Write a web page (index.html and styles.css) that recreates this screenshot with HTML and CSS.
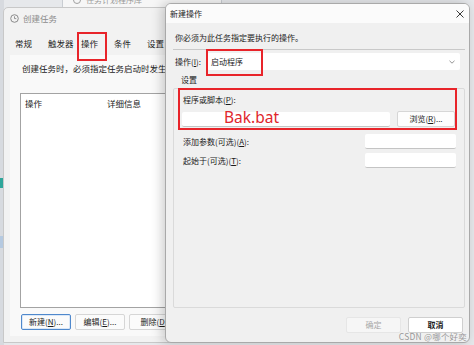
FILE: index.html
```html
<!DOCTYPE html>
<html>
<head>
    <meta charset="UTF-8">
    <title>新建操作</title>
    <link rel="stylesheet" href="styles.css">
</head>
<body>
<div class="desk">
    <!-- window behind everything, only its bottom strip shows -->
    <div class="win-far">
        <span class="far-icon"></span>
        <span class="far-title">任务计划程序库</span>
    </div>

    <!-- 创建任务 -->
    <div class="win-back">
        <div class="back-title">
            <svg class="clock" width="9" height="9" viewBox="0 0 9 9">
                <circle cx="4.5" cy="4.5" r="3.8" fill="none" stroke="#8a8a8a" stroke-width="1"/>
                <path d="M4.5 2.3V4.6H6.3" fill="none" stroke="#8a8a8a" stroke-width="0.9"/>
            </svg>
            <span>创建任务</span>
        </div>
        <div class="tabs">
            <span class="tab">常规</span>
            <span class="tab">触发器</span>
            <span class="tab tab-mark">操作</span>
            <span class="tab">条件</span>
            <span class="tab">设置</span>
        </div>
        <div class="panel">
            <div class="panel-desc">创建任务时，必须指定任务启动时发生的操作。</div>
            <div class="list">
                <div class="list-head">
                    <span class="col-a">操作</span>
                    <span>详细信息</span>
                </div>
            </div>
            <div class="list-btns">
                <span class="btn btn-focus">新建(<u>N</u>)...</span>
                <span class="btn">编辑(<u>E</u>)...</span>
                <span class="btn">删除(<u>D</u>)</span>
            </div>
        </div>
    </div>

    <!-- 新建操作 -->
    <div class="dlg">
        <div class="dlg-title">
            <span>新建操作</span>
            <svg width="8" height="8" viewBox="0 0 8 8">
                <path d="M0.5 0.5L7.5 7.5M7.5 0.5L0.5 7.5" stroke="#222" stroke-width="0.9"/>
            </svg>
        </div>
        <div class="dlg-body">
            <div class="lead">你必须为此任务指定要执行的操作。</div>
            <div class="sep"></div>
            <div class="op-row">
                <div class="op-label">操作(<u>I</u>):</div>
                <div class="combo">
                    <span class="combo-text">启动程序</span>
                    <svg width="6" height="4" viewBox="0 0 6 4">
                        <path d="M0.5 0.8L3 3.2L5.5 0.8" fill="none" stroke="#777" stroke-width="0.8"/>
                    </svg>
                </div>
            </div>
            <div class="grp-label">设置</div>
            <div class="grp">
                <div class="hl">
                    <div class="field-label">程序或脚本(<u>P</u>):</div>
                    <div class="prog-row">
                        <div class="input prog-input"><span class="big">Bak.bat</span></div>
                        <span class="btn browse">浏览(<u>R</u>)...</span>
                    </div>
                </div>
                <div class="opt-row">
                    <span>添加参数(可选)(<u>A</u>):</span>
                    <div class="input opt-input"></div>
                </div>
                <div class="opt-row">
                    <span>起始于(可选)(<u>T</u>):</span>
                    <div class="input opt-input"></div>
                </div>
            </div>
            <div class="actions">
                <span class="btn act disabled">确定</span>
                <span class="btn act cancel">取消</span>
            </div>
        </div>
        <div class="watermark">CSDN @哪个好奕</div>
    </div>
</div>
</body>
</html>
```

FILE: styles.css
```css
* {
    box-sizing: border-box;
}
body {
    margin: 0;
    background-color: #e4e6e9;
    font-family: "Noto Sans CJK SC", "Noto Sans", sans-serif;
    color: #1b1b1b;
}
u {
    text-decoration-thickness: 0.5px;
    text-underline-offset: 1px;
}

.desk {
    position: relative;
    width: 474px;
    height: 345px;
    overflow: hidden;
    background-color: #e6e8eb;
    background-image: linear-gradient(to bottom, #d7dadf 0, #d7dadf 178px, #2fa59a 178px, #2fa59a 188px,
        #d7dadf 188px, #d7dadf 236px, #b5c9e0 236px, #b5c9e0 248px, #d7dadf 248px);
    background-size: 4px 345px;
    background-repeat: no-repeat;
}

/* far window */
.win-far {
    position: absolute;
    left: 62px;
    top: -12px;
    width: 160px;
    height: 20px;
    background-color: #f6f6f6;
    border: 1px solid #c9cdd2;
    display: flex;
    align-items: flex-end;
    padding: 0 0 2px 10px;
    gap: 5px;
    font-size: 8px;
    color: #9a9a9a;
}
.far-icon {
    width: 8px;
    height: 8px;
    border-radius: 50%;
    border: 1px solid #a0a0a0;
    margin-bottom: 1px;
}

/* back window */
.win-back {
    position: absolute;
    left: 3px;
    top: 7px;
    width: 210px;
    height: 336px;
    background-color: #f2f2f2;
    border: 1px solid #c8c8c8;
    border-radius: 5px 5px 0 0;
    font-size: 8.5px;
    line-height: 12px;
}
.back-title {
    height: 20px;
    display: flex;
    align-items: center;
    padding-left: 6px;
    gap: 4px;
    color: #8c8c8c;
}
.tabs {
    display: flex;
    margin-top: 9px;
    padding-left: 11px;
}
.tab {
    width: 33px;
    position: relative;
}
.tab-mark::after {
    content: "";
    position: absolute;
    left: -4px;
    top: -5px;
    width: 26px;
    height: 25px;
    border: 2px solid #e8242a;
}
.panel {
    margin: 6px 0 0 6px;
    padding: 7px 0 0 10px;
    height: 281px;
    background-color: #f9f9f9;
}
.panel-desc {
    margin-left: 2px;
    white-space: nowrap;
}
.list {
    margin-top: 19px;
    height: 215px;
    background-color: #ffffff;
    border: 1px solid #a3a3a3;
    border-right: none;
}
.list-head {
    display: flex;
    padding: 3px 0 0 4px;
}
.col-a {
    width: 82px;
}
.list-btns {
    display: flex;
    gap: 4px;
    margin-top: 6px;
    padding-left: 1px;
}

.btn {
    display: flex;
    align-items: center;
    justify-content: center;
    height: 16px;
    width: 50px;
    font-size: 8px;
    background-color: #fbfbfb;
    border: 1px solid #d6d6d6;
    border-radius: 2px;
    white-space: nowrap;
}
.btn-focus {
    border: 1px solid #4f88cc;
    box-shadow: inset 0 0 0 1px #dbe8f7;
}

/* front dialog */
.dlg {
    position: absolute;
    left: 165px;
    top: 3px;
    width: 305px;
    height: 340px;
    background-color: #f0f0f0;
    border: 1px solid #a9a9a9;
    border-radius: 6px;
    overflow: hidden;
    box-shadow: -3px 0 12px rgba(0, 0, 0, 0.2);
    font-size: 8px;
    line-height: 12px;
}
.dlg-title {
    height: 19px;
    display: flex;
    align-items: center;
    justify-content: space-between;
    padding: 0 5px 0 4px;
    background-color: #fbfbfb;
}
.dlg-body {
    display: flex;
    flex-direction: column;
    padding: 9px 4px 0 7px;
}
.lead {
    margin-left: 2px;
}
.sep {
    margin-top: 5px;
    border-top: 1px solid #c9c9c9;
}
.op-row {
    display: flex;
    align-items: center;
    margin-top: 3px;
    height: 17px;
}
.op-label {
    flex-shrink: 0;
    margin: 0 6px 0 2px;
    white-space: nowrap;
}
.combo {
    flex: 1;
    height: 17px;
    margin-right: 5px;
    background-color: #ffffff;
    border-radius: 2px;
    display: flex;
    align-items: center;
    justify-content: space-between;
    padding: 0 5px 0 4px;
}
.combo-text {
    position: relative;
}
.combo-text::after {
    content: "";
    position: absolute;
    left: -5px;
    top: -7px;
    width: 53px;
    height: 23px;
    border: 2px solid #e8242a;
}
.grp-label {
    margin: 4px 0 0 8px;
}
.grp {
    margin-top: 2px;
    height: 220px;
    border: 1px solid #dadada;
    border-radius: 2px;
}
.hl {
    margin: -1px 7px 0 4px;
    border: 2px solid #e8242a;
    padding: 4px 0 1px 2px;
}
.field-label {
    margin-left: 1px;
}
.prog-row {
    display: flex;
    align-items: center;
    gap: 7px;
    margin-top: 5px;
}
.input {
    height: 15px;
    background-color: #ffffff;
    border-bottom: 1px solid #c4c4c4;
    border-radius: 2px;
}
.prog-input {
    width: 208px;
    display: flex;
    align-items: center;
    padding-left: 42px;
}
.big {
    font-family: "Noto Sans", sans-serif;
    font-size: 15.5px;
    color: #e0262c;
    line-height: 15px;
    margin-top: -3px;
}
.browse {
    width: 58px;
    background-color: #fdfdfd;
}
.opt-row {
    display: flex;
    align-items: center;
    justify-content: space-between;
    height: 15px;
    margin: 4px 8px 0 9px;
}
.opt-input {
    width: 91px;
}
.actions {
    display: flex;
    justify-content: flex-end;
    gap: 7px;
    margin: 9px 2px 0 0;
}
.act {
    width: 55px;
}
.disabled {
    color: #a8a8a8;
    background-color: #f6f6f6;
    border-color: #e6e6e6;
}
.cancel {
    background-color: #ffffff;
    border-color: #cfcfcf;
    font-weight: bold;
}
.watermark {
    position: absolute;
    right: 2px;
    bottom: 0;
    font-family: "Noto Sans CJK SC", sans-serif;
    font-size: 8.5px;
    line-height: 11px;
    color: rgba(120, 120, 120, 0.75);
    letter-spacing: 0.2px;
}
```
